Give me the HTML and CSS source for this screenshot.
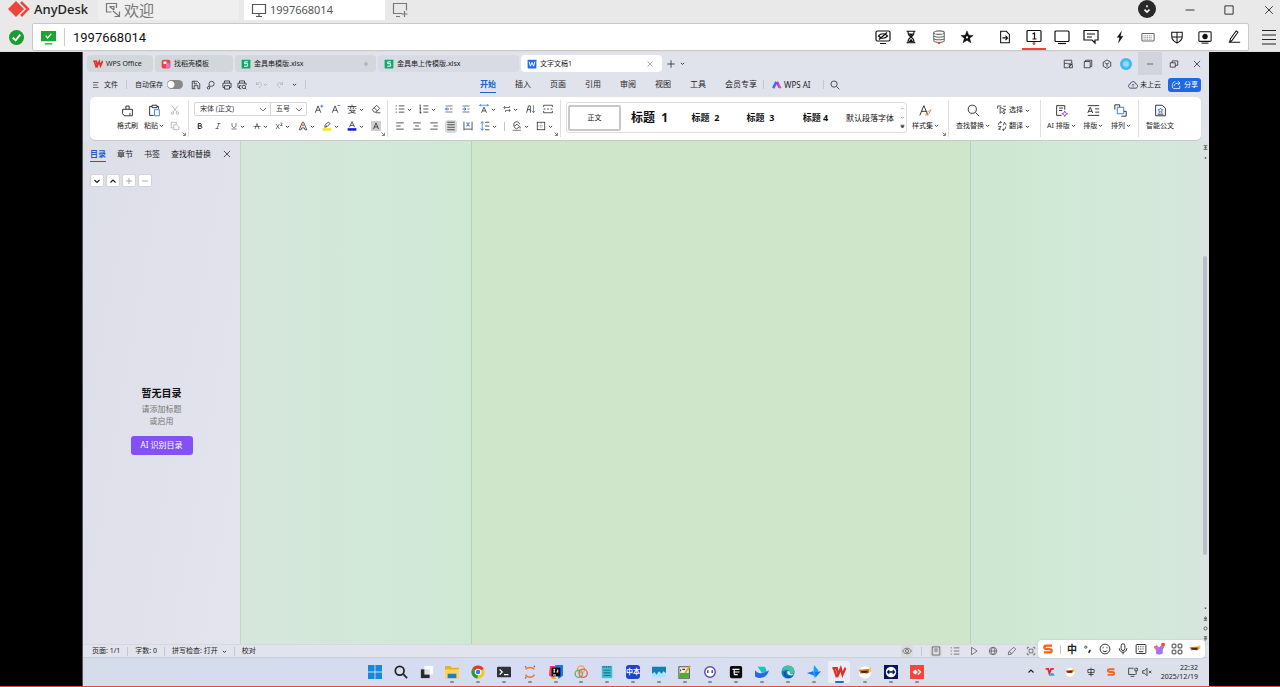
FILE: index.html
```html
<!DOCTYPE html>
<html lang="zh-CN">
<head>
<meta charset="utf-8">
<title>AnyDesk</title>
<link rel="stylesheet" href="styles.css">
</head>
<body>
<svg class="sprite" aria-hidden="true">
  <symbol id="chev" viewBox="0 0 8 8"><path d="M1.500 3 4 5.500 6.500 3"/></symbol>
  <symbol id="up" viewBox="0 0 8 8"><path d="M1.500 5.500 4 3l2.500 2.500"/></symbol>
  <symbol id="launch" viewBox="0 0 8 8"><path d="M2 2l4 4M6 2.500V6H2.500"/></symbol>
  <symbol id="x" viewBox="0 0 16 16"><path d="m3 3 10 10M13 3 3 13"/></symbol>
  <symbol id="minus" viewBox="0 0 16 16"><path d="M2 8h12"/></symbol>
  <symbol id="plus" viewBox="0 0 16 16"><path d="M2 8h12M8 2v12"/></symbol>
  <symbol id="square" viewBox="0 0 16 16"><path d="M2.500 2.500h11v11h-11z"/></symbol>
  <symbol id="menu" viewBox="0 0 16 16"><path d="M2 3h11M2 8h9M2 13h11"/></symbol>
  <symbol id="burger" viewBox="0 0 16 16"><path d="M1 1.500h14M1 6h14M1 10.500h14M1 15h14"/></symbol>
  <symbol id="welcome" viewBox="0 0 16 16"><path d="M6.500 10H1.500V1.500h10V6M4.500 4.500H9v3M8 9l6 5M14.500 9.500v5H9.500M4.500 4.500 9 8"/></symbol>
  <symbol id="screen" viewBox="0 0 16 16"><path d="M1.500 2.500h13v9h-13zM5 14.500h6M8 12v2"/></symbol>
  <symbol id="newscreen" viewBox="0 0 16 16"><path d="M10 11.500H1.500v-10h13v7M12.500 9v6M9.500 12h6M4 14.500h4"/></symbol>
  <symbol id="eyeoff" viewBox="0 0 16 16"><rect x="1" y="2" width="14" height="10" rx="1.500"/><path d="M3.500 7c2.500-3 6.500-3 9 0-2.500 3-6.500 3-9 0ZM4 10.500l8-7M5 14.500h6"/></symbol>
  <symbol id="glass" viewBox="0 0 16 16"><path d="M3 1.500h10M3 14.500h10M4.500 2c0 4 2 5 3.500 6 1.500-1 3.500-2 3.500-6M4.500 14c0-4 2-5 3.500-6 1.500 1 3.500 2 3.500 6"/><path d="M6 13.500 8 11l2 2.500zM6.500 4.500h3L8 6.500z" fill="currentColor"/></symbol>
  <symbol id="db" viewBox="0 0 16 16"><ellipse cx="8" cy="3" rx="6" ry="2"/><path d="M2 3v9c0 3 12 3 12 0V3M2 6c0 3 12 3 12 0M2 9c0 3 12 3 12 0"/><path d="m7 14 1 1.500L9 14" stroke="#ef443b" stroke-width="2"/></symbol>
  <symbol id="star" viewBox="0 0 16 16"><path d="m8 1 2 5 5 .3-4 3.200 1.500 5L8 11.700l-4.500 2.800 1.500-5-4-3.200L6 6z" fill="currentColor" stroke-width=".6"/><circle cx="8" cy="8.500" r="1.300" fill="#fff" stroke="none"/></symbol>
  <symbol id="filego" viewBox="0 0 16 16"><path d="M3 1.500h6.500L13 5v9.500H3zM5 9h6M8.500 6.500 11 9l-2.500 2.500"/></symbol>
  <symbol id="screen1" viewBox="0 0 16 16"><rect x="1" y="1.500" width="14" height="11" rx="1"/><path d="M6.500 5 8.500 4v6M6.500 10h4"/><circle cx="8" cy="14.500" r="1.400" fill="#ef443b" stroke="none"/></symbol>
  <symbol id="display" viewBox="0 0 16 16"><rect x="1" y="2" width="14" height="10.500" rx="1"/><path d="M4 14.500h8"/></symbol>
  <symbol id="chat" viewBox="0 0 16 16"><path d="M1 1.500h14v9.500h-3v3l-3-3H1zM4 5h8M4 8h5"/></symbol>
  <symbol id="bolt" viewBox="0 0 16 16"><path d="M10 1 4.500 8.500h3L6 15l5.500-8H8.500z" fill="currentColor" stroke-width=".2"/></symbol>
  <symbol id="keyboard" viewBox="0 0 16 16"><rect x="1" y="4" width="14" height="8.500" rx="1"/><path d="M3 6.500h10M3 8.500h10M3 10.500h10" stroke-dasharray="1 1" stroke-width="1"/></symbol>
  <symbol id="shield" viewBox="0 0 16 16"><path d="M2 2.500h12v5c0 4-3 6-6 7.500-3-1.500-6-3.500-6-7.500zM8 2.500V15M2 8h12"/></symbol>
  <symbol id="record" viewBox="0 0 16 16"><rect x="1" y="2" width="14" height="11" rx="1"/><circle cx="8" cy="7.500" r="2.500" fill="currentColor"/><path d="M4 15h8"/></symbol>
  <symbol id="penline" viewBox="0 0 16 16"><path d="M3 14 4 10l6.500-9 2 1.500L6 11.500 3 14h12"/></symbol>
  <symbol id="wps" viewBox="0 0 16 16"><path d="M.500 3.500h5L7 11l3-7 2 7 3.500-8" stroke="#e32d27" stroke-width="2.600"/><path d="M2 3.500 5 12.500l2-2" stroke="#e32d27" stroke-width="2.400"/></symbol>
  <symbol id="docer" viewBox="0 0 16 16"><rect x="1" y="1" width="14" height="14" rx="3" fill="#f0414b" stroke="none"/><path d="M4 4h5v4H4z" fill="#fff" stroke="none"/><path d="M8 7h6v7H8z" fill="#df72d0" stroke="none"/></symbol>
  <symbol id="sheet" viewBox="0 0 16 16"><rect x="1" y="1" width="14" height="14" rx="1" fill="#12a66a" stroke="none"/><path d="M11 4.500H6v3h4.500v4H5" stroke="#fff" stroke-width="1.600"/></symbol>
  <symbol id="word" viewBox="0 0 16 16"><rect x="1" y="1" width="14" height="14" rx="1" fill="#226bed" stroke="none"/><path d="m3.500 4.500 2 7 2.500-6 2.500 6 2-7" stroke="#fff" stroke-width="1.600"/></symbol>
  <symbol id="save" viewBox="0 0 16 16"><path d="M7 14H2V2h8l4 4v8h-3M5 2v4h5M5 14V9h6v5"/></symbol>
  <symbol id="pin" viewBox="0 0 16 16"><path d="M5 11V6a4 4 0 1 1 4 4H6"/><circle cx="4" cy="12.500" r="2"/></symbol>
  <symbol id="print" viewBox="0 0 16 16"><path d="M4 5V1.500h8V5M4 12H1.500V5h13v7H12M4 9h8v5.500H4z"/></symbol>
  <symbol id="preview" viewBox="0 0 16 16"><path d="M4 5V1.500h8V5M4 12H1.500V5h13v3M7 14H4V9h3"/><circle cx="11" cy="11" r="2.800"/><path d="m13 13 2 2"/></symbol>
  <symbol id="undo" viewBox="0 0 16 16"><path d="M3 2v5h5M3 7c4-6 10-4 10 0 0 3-3 4-5 7"/></symbol>
  <symbol id="redo" viewBox="0 0 16 16"><path d="M13 2v5H8M13 7C9 1 3 3 3 7c0 3 3 4 5 7"/></symbol>
  <symbol id="search" viewBox="0 0 16 16"><circle cx="6.500" cy="6.500" r="5"/><path d="m10.500 10.500 4.500 4.500"/></symbol>
  <symbol id="ai" viewBox="0 0 16 16"><path d="m2 13 5-10" stroke="#3f69ff" stroke-width="4"/><path d="m8 3 4 9" stroke="#a33dff" stroke-width="4"/><path d="m11 9 3 4" stroke="#ff479b" stroke-width="3"/></symbol>
  <symbol id="cloud" viewBox="0 0 16 16"><path d="M4 13C-1 12 1 6 4 6c1-5 8-4 8 0 5 1 4 7 0 7z"/><path d="M8 11V6.500M6 8.500l2-2 2 2" stroke="#2a66e0"/></symbol>
  <symbol id="share" viewBox="0 0 16 16"><path d="M7 2.500C1 3 1 13.500 4 13.500h10V9M5 10c0-4 3-5 9-5M11 2l3.500 3L11 8"/></symbol>
  <symbol id="image" viewBox="0 0 16 16"><path d="M8 14H2V2h12v5M2 8c4-3 6 2 12-2M10 9h5v5h-5zM9 14l6-7"/></symbol>
  <symbol id="layers" viewBox="0 0 16 16"><path d="M2 4h9.500v10H2zM4 4V2h10v10h-2"/></symbol>
  <symbol id="cube" viewBox="0 0 16 16"><path d="m8 1.500 6 3.500v6.500L8 15l-6-3.500V5zM4.500 6 8 8l3.500-2M8 8v4.500"/></symbol>
  <symbol id="restore" viewBox="0 0 16 16"><path d="M2 6h8v7H2zM5 6V3h9v7h-4"/></symbol>
  <symbol id="brush" viewBox="0 0 16 16"><path d="M2 6.500h12v8H4L2 12zM6 6.500V2.500h4v4M11 11v3"/></symbol>
  <symbol id="paste" viewBox="0 0 16 16"><path d="M7 14H2V3h3M11 3h2v3M5 1.500h6v3H5z"/><path d="M8 7h6v7.500H8z" stroke="#3578d9"/></symbol>
  <symbol id="cut" viewBox="0 0 16 16"><path d="m3 1 8 10M13 1 5 11"/><circle cx="4" cy="13" r="2"/><circle cx="12" cy="13" r="2"/></symbol>
  <symbol id="copy" viewBox="0 0 16 16"><path d="M5 11H2V2h8v3M6 6h5l3 3v5H6z"/></symbol>
  <symbol id="Aplus" viewBox="0 0 16 16"><path d="m2 14 4.500-11L11 14M3.500 10h6"/><path d="M12.500 1v5M10 3.500h5" stroke="#2d6be0"/></symbol>
  <symbol id="Aminus" viewBox="0 0 16 16"><path d="m2 14 4.500-11L11 14M3.500 10h6"/><path d="M10 2.500h5" stroke="#2d6be0"/></symbol>
  <symbol id="phon" viewBox="0 0 16 16"><path d="M1 4h14M8 1v3M6 4v4M10 4v4M3 6 1 8M13 6l2 2M3 10h10c-1 3-6 4-11 5M5 10c2 3 5 4 9 5"/></symbol>
  <symbol id="eraser" viewBox="0 0 16 16"><path d="m2 9 7-7 5 5-6 6H5zM5 6l5 5M8 14h7"/></symbol>
  <symbol id="B" viewBox="0 0 16 16"><path d="M4.500 3v10M4.500 3H8c4 0 4 4.700 0 4.700H4.500M8 7.700c5 0 5 5.300 0 5.300H4.500" stroke-width="2"/></symbol>
  <symbol id="I" viewBox="0 0 16 16"><path d="M7 3h6M3 13h6M10 3 6 13"/></symbol>
  <symbol id="U" viewBox="0 0 16 16"><path d="M4 2v5c0 5 8 5 8 0V2M3 14h10"/></symbol>
  <symbol id="strike" viewBox="0 0 16 16"><path d="m4 14 4-11 4 11M1 9h14"/></symbol>
  <symbol id="X2" viewBox="0 0 16 16"><path d="m2 4 7 10M9 4 2 14M11 2h3v2l-3 3h4"/></symbol>
  <symbol id="Aeffect" viewBox="0 0 16 16"><path d="m2 14 5-12h2l5 12h-3l-1-3H6l-1 3z"/><path d="M7 8h2L8 5z" stroke="#e8562c"/></symbol>
  <symbol id="marker" viewBox="0 0 16 16"><path d="M3 8h5M5 6l5-4 3 2-5 5-4 1"/><path d="M1 13.500h14" stroke="#f0ec00" stroke-width="4"/></symbol>
  <symbol id="Acolor" viewBox="0 0 16 16"><path d="m4 10 4-9 4 9M5.500 7h5"/><path d="M1 13.500h14" stroke="#1010ee" stroke-width="4"/></symbol>
  <symbol id="Ashade" viewBox="0 0 16 16"><path d="M0 0h16v16H0z" fill="#cfcfcf" stroke="none"/><path d="m4 13 4-10 4 10M5.500 9.500h5"/></symbol>
  <symbol id="bullets" viewBox="0 0 16 16"><path d="M6 3h9M6 8h9M6 13h9M1 3h2M1 8h2M1 13h2"/></symbol>
  <symbol id="numbers" viewBox="0 0 16 16"><path d="M7 3h8M7 8h8M7 13h8M2 1v14M1 2h1M1 7h2M1 14h3"/></symbol>
  <symbol id="outdent" viewBox="0 0 16 16"><path d="M1 2h14M10 8h5M1 14h14"/><path d="M8 8H1M4 5 1 8l3 3" stroke="#2d6be0" stroke-width="2"/></symbol>
  <symbol id="indent" viewBox="0 0 16 16"><path d="M1 2h14M11 8h4M1 14h14"/><path d="M1 8h7M5 5l3 3-3 3" stroke="#2d6be0" stroke-width="2"/></symbol>
  <symbol id="Awide" viewBox="0 0 16 16"><path d="m4 14 4-9 4 9M5.500 11h5"/><path d="M1 2h14M3 .5 1 2l2 2M13 .5 15 2l-2 2" stroke="#2d6be0"/></symbol>
  <symbol id="wrapmark" viewBox="0 0 16 16"><path d="M4 2 1.500 5 4 8M2 5h11V2M12 8l2.500 3-2.500 3M14 11H5v3"/></symbol>
  <symbol id="sort" viewBox="0 0 16 16"><path d="M1 14 4 3h3v11M2 9h5"/><path d="M12 2v12M9.500 11l2.500 3 2.500-3" stroke="#2d6be0"/></symbol>
  <symbol id="marks" viewBox="0 0 16 16"><path d="M1 5V2h14v3M1 11v3h14v-3M1 8h3M6.500 8h3M12 8h3"/></symbol>
  <symbol id="left" viewBox="0 0 16 16"><path d="M2 3h12M2 8h7M2 13h12"/></symbol>
  <symbol id="center" viewBox="0 0 16 16"><path d="M2 3h12M5 8h6M2 13h12"/></symbol>
  <symbol id="right" viewBox="0 0 16 16"><path d="M2 3h12M7 8h7M2 13h12"/></symbol>
  <symbol id="just" viewBox="0 0 16 16"><path d="M2 2h12M2 6h12M2 10h12M2 14h12"/></symbol>
  <symbol id="dist" viewBox="0 0 16 16"><path d="M1.500 1v14M14.500 1v14M2 13h12"/><path d="M5 3h2v5H5M11 3H9v5h2" stroke="#2d6be0"/></symbol>
  <symbol id="spacing" viewBox="0 0 16 16"><path d="M8 2h7M8 8h7M8 14h7"/><path d="M3.500 1v14M1 4l2.500-3L6 4M1 12l2.500 3L6 12" stroke="#2d6be0"/></symbol>
  <symbol id="bucket" viewBox="0 0 16 16"><path d="M3 8V5c0-5 9-5 9 0M3 9l5-4 4 4-5 4zM13 9v3"/><path d="M1 15h13" stroke="#999" stroke-width="2"/></symbol>
  <symbol id="border" viewBox="0 0 16 16"><rect x="2" y="2" width="12" height="12"/><path d="M8 4v8M4 8h8" stroke-dasharray="1 2"/></symbol>
  <symbol id="styles" viewBox="0 0 16 16"><path d="m1 14 5-12 5 12M3 9h6"/><path d="m8 14 2-4 5-3-3 5z" stroke="#d98958"/></symbol>
  <symbol id="cursor" viewBox="0 0 16 16"><path d="m5 4 9 3.500-4 1.500 3 4-2 1.500-3-4-3 3zM1 1.500h6M1 1.500V6M10 2h4"/></symbol>
  <symbol id="translate" viewBox="0 0 16 16"><path d="M2 6c0-3 2-4 5-4M5 0l2 2-2 2M14 9c0 4-2 5-5 5M11 12l-2 2 2 2M2 9h5M3 14l3-5M10 7l2-5 3 5M2 13h4"/></symbol>
  <symbol id="ailayout" viewBox="0 0 16 16"><path d="M8 14H2V2h10v5M5 5h5M5 8h4"/><path d="m12 8.500 1 2.500 2.500 1-2.500 1-1 2.500-1-2.500-2.500-1 2.500-1z" stroke="#8a43e0"/></symbol>
  <symbol id="layout" viewBox="0 0 16 16"><path d="M1 2h14M1 14h14M10 6h5M10 10h5M1 11l3-7 3 7M2 9h4"/></symbol>
  <symbol id="arrange" viewBox="0 0 16 16"><path d="M1 7V1h6v3M9 15h6V9h-3"/><path d="M4 4h8v8H4z" stroke="#2d6be0"/></symbol>
  <symbol id="smart" viewBox="0 0 16 16"><path d="M2 1.500h8L14 5v9.500H2zM4.500 12.500h7"/><path d="m8 5 1 1.700 2 .3-1.500 1.500.5 2-2-1-2 1 .5-2L5 7l2-.3z" stroke="#2d6be0"/></symbol>
  <symbol id="eye" viewBox="0 0 16 16"><path d="M1 8c3.500-6 10.500-6 14 0-3.500 6-10.500 6-14 0Z"/><circle cx="8" cy="8" r="2.500"/></symbol>
  <symbol id="page" viewBox="0 0 16 16"><path d="M2 1.500h12v13H2zM5 5h6M5 8h6"/></symbol>
  <symbol id="play" viewBox="0 0 16 16"><path d="m4 2 9 6-9 6z"/></symbol>
  <symbol id="globe" viewBox="0 0 16 16"><circle cx="8" cy="8" r="6"/><path d="M2 8h12M8 2c-4 3-4 9 0 12M8 2c4 3 4 9 0 12"/></symbol>
  <symbol id="pencil" viewBox="0 0 16 16"><path d="m2 14 1-5 8-7 3 3-7 8zM3 9c2 0 3 1 4 4"/></symbol>
  <symbol id="focus" viewBox="0 0 16 16"><path d="M2 5V2h3M11 2h3v3M2 11v3h3M14 11v3h-3M5 5h6v6H5z"/></symbol>
  <symbol id="sogou" viewBox="0 0 16 16"><path d="M13.500 3.500H6c-4 0-4 4.500 0 4.500h4c4 0 4 4.500 0 4.500H2.500" stroke="#f3661c" stroke-width="3"/></symbol>
  <symbol id="punct" viewBox="0 0 16 16"><circle cx="4.500" cy="5" r="1.800"/><path d="M11 9v2l-2 3" stroke-width="2.600"/></symbol>
  <symbol id="smile" viewBox="0 0 16 16"><circle cx="8" cy="8" r="6.500"/><path d="M5.500 5.500V7M10.500 5.500V7M5 10c1.500 2 4.500 2 6 0"/></symbol>
  <symbol id="mic" viewBox="0 0 16 16"><rect x="5.500" y="1" width="5" height="9" rx="2.500"/><path d="M3 7c0 7 10 7 10 0M8 12v3"/></symbol>
  <symbol id="softkeys" viewBox="0 0 16 16"><rect x="1.500" y="2" width="13" height="12" rx="1"/><path d="M4 5h8M4 8h8" stroke-dasharray="1.500 1.500"/><path d="M5 11.500h6"/></symbol>
  <symbol id="shirt" viewBox="0 0 16 16"><path d="m1 5 4-2 3 3 3-3 4 2-2 4v5c-3 2-7 2-9 0V9z" fill="#9b78ee" stroke="none"/><path d="M1 5 5 3l3 3v4H4z" fill="#ea6ba4" stroke="none"/><circle cx="13.500" cy="2" r="2.500" fill="#f34b38" stroke="none"/></symbol>
  <symbol id="grid" viewBox="0 0 16 16"><rect x="1.500" y="1.500" width="5" height="5" rx="1"/><rect x="9.500" y="1.500" width="5" height="5" rx="1"/><rect x="1.500" y="9.500" width="5" height="5" rx="1"/><rect x="9.500" y="9.500" width="5" height="5" rx="1"/></symbol>
  <symbol id="dog" viewBox="0 0 16 16"><circle cx="8" cy="8.500" r="7" fill="#fff" stroke="none"/><path d="M1 5.500 13 4.500v4l-3 1.500-3-1-4 1z" fill="#d76b22" stroke="none"/><path d="m3 7 8-.5v2L7 9l-3-.5z" fill="#35211c" stroke="none"/><path d="M14 3v5" stroke="#f7c92c" stroke-width="2"/></symbol>
  <symbol id="win" viewBox="0 0 16 16"><path d="M0 0h7.500v7.500H0zM8.500 0H16v7.500H8.500zM0 8.500h7.500V16H0zM8.500 8.500H16V16H8.500z" fill="#1689d9" stroke="none"/></symbol>
  <symbol id="tasks" viewBox="0 0 16 16"><path d="M1 5h10v10H1z" fill="#292929" stroke="none"/><path d="M5 1h10v10H5z" fill="#fff" fill-opacity=".85" stroke="none"/></symbol>
  <symbol id="folder" viewBox="0 0 16 16"><path d="M0 1h6l2 2h8v12H0z" fill="#f0ae22" stroke="none"/><path d="M0 5h16v10H0z" fill="#ffd353" stroke="none"/><path d="M3 10h10v5H3z" fill="#167fd0" stroke="none"/></symbol>
  <symbol id="chrome" viewBox="0 0 16 16"><circle cx="8" cy="8" r="7.500" fill="#f7c51d" stroke="none"/><path d="M8 8 1.500 4.200a7.500 7.500 0 0 1 13 0z" fill="#e23b2e" stroke="none"/><path d="M8 8 1.500 4.200a7.500 7.500 0 0 0 6 11.300z" fill="#299b4c" stroke="none"/><circle cx="8" cy="8" r="3.200" fill="#317be9" stroke="#fff"/></symbol>
  <symbol id="term" viewBox="0 0 16 16"><rect y="2" width="16" height="12" rx="1" fill="#303236" stroke="none"/><path d="m3 5 3 3-3 3M8 11h5" stroke="#fff" stroke-width="1.500"/></symbol>
  <symbol id="jupyter" viewBox="0 0 16 16"><path d="M3 5c2-3 8-3 10 0M3 11c2 4 8 4 10 0" stroke="#ef7828" stroke-width="1.700"/><circle cx="3" cy="2" r="1" fill="#777" stroke="none"/><circle cx="13" cy="1.500" r="1" fill="#777" stroke="none"/><circle cx="3" cy="14.500" r="1" fill="#777" stroke="none"/></symbol>
  <symbol id="idea" viewBox="0 0 16 16"><path d="M1 1h8L5 15 0 12z" fill="#fb385d" stroke="none"/><path d="M7 0h9v12l-5 4z" fill="#1679ee" stroke="none"/><path d="m3 12 6 4H3z" fill="#ff9a24" stroke="none"/><path d="M3 3h10v10H3z" fill="#050505" stroke="none"/><path d="M5 5h2M6 5v3M5 8h2M10 5v3H8.500M4.500 11.500H8" stroke="#fff"/></symbol>
  <symbol id="navicat" viewBox="0 0 16 16"><circle cx="8" cy="5" r="4" stroke="#f3a43b" stroke-width="1.500"/><circle cx="5.500" cy="10" r="4.200" stroke="#63af78" stroke-width="1.500"/><circle cx="10.500" cy="9.500" r="4.700" stroke="#e75f48" stroke-width="1.500"/></symbol>
  <symbol id="notes" viewBox="0 0 16 16"><path d="M2 1h12v14H2z" fill="#45bed0" stroke="none"/><path d="M4 6h8M4 9h8M4 12h8" stroke="#17738c"/><path d="M3 2h10" stroke="#265f70" stroke-width="2" stroke-dasharray="1 1"/></symbol>
  <symbol id="monitor" viewBox="0 0 16 16"><path d="M0 2h16v12H0z" fill="#a8e4fa" stroke="none"/><path d="M0 2h16v7l-3-2-2 3-3-3-3 4-2-3-3 2z" fill="#147eb8" stroke="none"/></symbol>
  <symbol id="npp" viewBox="0 0 16 16"><path d="M1 2h12v13H1z" fill="#eef3dd" stroke="#555"/><path d="M1.500 9h11v5.500h-11z" fill="#4cae38" stroke="none"/><path d="m8 9 6-8" stroke="#d8a520" stroke-width="2"/><path d="M3 5v2M5 5h3" stroke="#333"/></symbol>
  <symbol id="face" viewBox="0 0 16 16"><circle cx="8" cy="8" r="6" fill="#fff" stroke="#5b46bd" stroke-width="1.600"/><path d="M5.500 6v3M10.500 6v3" stroke="#333" stroke-width="1.500"/></symbol>
  <symbol id="cursorapp" viewBox="0 0 16 16"><rect x="1" y="1" width="14" height="14" rx="2" fill="#090909" stroke="none"/><path d="M4 5h8M5 8h7M6 11h4M6 5v6" stroke="#fff"/></symbol>
  <symbol id="lark" viewBox="0 0 16 16"><path d="M3 2h8c2 2 2 4 2 6L8 9z" fill="#13c9b1" stroke="none"/><path d="M0 6c4 5 9 4 16 0-2 8-9 11-16 7z" fill="#2767ed" stroke="none"/></symbol>
  <symbol id="edge" viewBox="0 0 16 16"><circle cx="8" cy="8" r="7.500" fill="#1683c9" stroke="none"/><path d="M1 7C3-2 16-1 15.500 8c-3 4-7 2-5-1-4-3-7-1-9.500 0" fill="#42c6a2" stroke="none"/><path d="M6 7c-2 6 4 7 8 5-5 6-12 2-11-4z" fill="#1056a8" stroke="none"/><path d="M7 8c1-2 4-1 3 1 1 2 3 2 5 1-2 3-8 2-8-2" fill="#e7f2f5" stroke="none"/></symbol>
  <symbol id="bird" viewBox="0 0 16 16"><path d="m8 0 5 6-4 9-2-5z" fill="#16a6ff" stroke="none"/><path d="m0 9 7-2 1 5zM9 8l7-1-6 7z" fill="#1674f0" stroke="none"/></symbol>
  <symbol id="team" viewBox="0 0 16 16"><path d="M0 0h16v16H0z" fill="#08145d" stroke="none"/><circle cx="8" cy="8" r="6" fill="#fff" stroke="none"/><path d="M4 8h8M6 6 4 8l2 2M10 6l2 2-2 2" stroke="#08145d" stroke-width="1.500"/></symbol>
  <symbol id="anyapp" viewBox="0 0 16 16"><path d="M0 0h16v16H0z" fill="#fb423b" stroke="none"/><path d="m6 5 3 3-3 3-3-3z" fill="#fff" stroke="none"/><path d="m9 5 3 3-3 3" stroke="#fff" stroke-width="1.500"/></symbol>
  <symbol id="updater" viewBox="0 0 16 16"><path d="M1 3h4l2 7 3-7h4" stroke="#df3028" stroke-width="3"/><path d="M7 14c1-7 9-5 8 0z" fill="#27a6e8" stroke="none"/></symbol>
  <symbol id="usb" viewBox="0 0 16 16"><path d="M8 1v14M3 4h10v5H3zM4 12h8"/></symbol>
  <symbol id="net" viewBox="0 0 16 16"><path d="M9 2H1v10h11M4 15h6M12 2h3v4h-4V2M13 6v6"/></symbol>
  <symbol id="mute" viewBox="0 0 16 16"><path d="M1 6h3l4-4v12l-4-4H1zM11 6l4 4M15 6l-4 4"/></symbol>
  <symbol id="endpage" viewBox="0 0 8 8"><path d="M1 1h6M1 7h6M2 4h4M4 2v4"/></symbol>
</svg>

<header class="titlebar">
  <svg class="logo" viewBox="0 0 22 16"><path d="m8 0 8 8-8 8-8-8z" fill="#ef443b"/><path d="m13 1 7 7-7 7" fill="none" stroke="#ef443b" stroke-width="2.500"/></svg>
  <h1 class="brand">AnyDesk</h1>
  <button class="session welcome"><svg class="i lg"><use href="#welcome"/></svg>欢迎</button>
  <button class="session current"><svg class="i lg"><use href="#screen"/></svg>1997668014</button>
  <button class="session-new" aria-label="新会话"><svg class="i lg"><use href="#newscreen"/></svg></button>
  <div class="frame-controls">
    <button class="user" aria-label="账户"><svg class="i sm" viewBox="0 0 16 16"><path d="m4 9 4 4 4-4M8 2v3" stroke-width="2.500"/></svg></button>
    <button aria-label="最小化"><svg class="i md"><use href="#minus"/></svg></button>
    <button aria-label="最大化"><svg class="i md"><use href="#square"/></svg></button>
    <button aria-label="关闭"><svg class="i md"><use href="#x"/></svg></button>
  </div>
</header>
<nav class="addressbar">
  <svg class="ok" viewBox="0 0 16 16"><circle cx="8" cy="8" r="8" fill="#1a9d30"/><path d="m4 8 3 3 5-6" fill="none" stroke="#fff" stroke-width="2"/></svg>
  <div class="address">
    <svg class="ok" viewBox="0 0 16 16"><path d="M0 1h16v11H0zM4 14h8v1.500H4z" fill="#1ba635"/><path d="m5 6 2 2.500L11 4" fill="none" stroke="#fff" stroke-width="1.300"/></svg>
    <input class="address-input" aria-label="远程地址" value="1997668014">
    <div class="remote-tools first">
      <button aria-label="隐私"><svg class="i lg"><use href="#eyeoff"/></svg></button>
      <button aria-label="等待"><svg class="i tool"><use href="#glass"/></svg></button>
      <button class="faded" aria-label="数据"><svg class="i tool"><use href="#db"/></svg></button>
      <button aria-label="收藏"><svg class="i tool"><use href="#star"/></svg></button>
    </div>
    <div class="remote-tools second">
      <button aria-label="文件传输"><svg class="i tool"><use href="#filego"/></svg></button>
      <button class="selected" aria-label="显示器 1"><svg class="i lg"><use href="#screen1"/></svg></button>
      <button aria-label="显示"><svg class="i lg"><use href="#display"/></svg></button>
      <button aria-label="聊天"><svg class="i lg"><use href="#chat"/></svg></button>
      <button aria-label="操作"><svg class="i tool"><use href="#bolt"/></svg></button>
      <button class="faded" aria-label="键盘"><svg class="i tool"><use href="#keyboard"/></svg></button>
      <button aria-label="权限"><svg class="i tool"><use href="#shield"/></svg></button>
      <button aria-label="录制"><svg class="i tool"><use href="#record"/></svg></button>
      <button aria-label="白板"><svg class="i tool"><use href="#penline"/></svg></button>
    </div>
  </div>
  <button class="main-menu" aria-label="菜单"><svg class="i lg"><use href="#burger"/></svg></button>
</nav>

<main class="remote">
<div class="desktop">
  <div class="doc-tabs">
    <button class="doc-tab home"><svg class="i sm"><use href="#wps"/></svg>WPS Office</button>
    <button class="doc-tab docer"><svg class="i sm"><use href="#docer"/></svg>找稻壳模板</button>
    <button class="doc-tab"><svg class="i sm"><use href="#sheet"/></svg>金具串模版.xlsx<span class="unsaved"></span></button>
    <button class="doc-tab pale"><svg class="i sm"><use href="#sheet"/></svg>金具串上传模版.xlsx</button>
    <button class="doc-tab active"><svg class="i sm"><use href="#word"/></svg>文字文稿1<svg class="i xs close"><use href="#x"/></svg></button>
    <button class="add" aria-label="新建"><svg class="i sm"><use href="#plus"/></svg><svg class="i chev"><use href="#chev"/></svg></button>
    <div class="wps-tools">
      <button aria-label="图片"><svg class="i sm"><use href="#image"/></svg></button>
      <button aria-label="窗口"><svg class="i sm"><use href="#layers"/></svg></button>
      <button aria-label="应用"><svg class="i sm"><use href="#cube"/></svg></button>
    </div>
    <span class="avatar"></span>
    <div class="wps-frame">
      <button class="hover" aria-label="最小化"><svg class="i xs"><use href="#minus"/></svg></button>
      <button aria-label="还原"><svg class="i sm"><use href="#restore"/></svg></button>
      <button aria-label="关闭"><svg class="i sm"><use href="#x"/></svg></button>
    </div>
  </div>

  <div class="menubar">
    <div class="quick">
      <button class="file"><svg class="i xs"><use href="#menu"/></svg>文件</button>
      <span class="rule"></span>
      <label class="autosave">自动保存<input type="checkbox"></label>
      <div class="quick-icons">
        <button aria-label="保存"><svg class="i sm"><use href="#save"/></svg></button>
        <button aria-label="输出"><svg class="i sm"><use href="#pin"/></svg></button>
        <button aria-label="打印"><svg class="i sm"><use href="#print"/></svg></button>
        <button aria-label="预览"><svg class="i sm"><use href="#preview"/></svg></button>
      </div>
      <button class="dim" aria-label="撤销"><svg class="i xs"><use href="#undo"/></svg><svg class="i chev"><use href="#chev"/></svg></button>
      <button class="dim" aria-label="恢复"><svg class="i xs"><use href="#redo"/></svg></button>
      <button aria-label="更多"><svg class="i chev"><use href="#chev"/></svg></button>
      <span class="rule"></span>
    </div>
    <nav class="menus">
      <button class="on">开始</button><button>插入</button><button>页面</button><button>引用</button><button>审阅</button><button>视图</button><button>工具</button><button>会员专享</button>
    </nav>
    <span class="rule"></span>
    <button class="wpsai"><svg class="i sm"><use href="#ai"/></svg>WPS AI</button>
    <span class="rule"></span>
    <button class="find" aria-label="搜索"><svg class="i sm"><use href="#search"/></svg></button>
    <button class="cloud"><svg class="i sm"><use href="#cloud"/></svg>未上云</button>
    <button class="share"><svg class="i sm"><use href="#share"/></svg>分享</button>
  </div>

  <section class="ribbon">
    <div class="group clipboard">
      <button class="big"><svg class="i rb"><use href="#brush"/></svg><span>格式刷</span></button>
      <button class="big"><svg class="i rb"><use href="#paste"/></svg><span>粘贴<svg class="i chev"><use href="#chev"/></svg></span></button>
      <div class="stack dim">
        <button aria-label="剪切"><svg class="i sm"><use href="#cut"/></svg></button>
        <button aria-label="复制"><svg class="i sm"><use href="#copy"/></svg></button>
      </div>
      <svg class="i launch"><use href="#launch"/></svg>
    </div>
    <div class="group font">
      <div class="row">
        <div class="combos">
          <select aria-label="字体"><option>宋体 (正文)</option></select>
          <select class="size" aria-label="字号"><option>五号</option></select>
        </div>
        <button aria-label="增大字号"><svg class="i sm"><use href="#Aplus"/></svg></button>
        <button aria-label="减小字号"><svg class="i sm"><use href="#Aminus"/></svg></button>
        <button aria-label="拼音"><svg class="i sm"><use href="#phon"/></svg><svg class="i chev"><use href="#chev"/></svg></button>
        <button aria-label="清除格式"><svg class="i sm"><use href="#eraser"/></svg></button>
      </div>
      <div class="row">
        <button aria-label="加粗"><svg class="i xs"><use href="#B"/></svg></button>
        <button aria-label="倾斜"><svg class="i xs"><use href="#I"/></svg></button>
        <button aria-label="下划线"><svg class="i xs"><use href="#U"/></svg><svg class="i chev"><use href="#chev"/></svg></button>
        <button aria-label="删除线"><svg class="i xs"><use href="#strike"/></svg><svg class="i chev"><use href="#chev"/></svg></button>
        <button aria-label="上标"><svg class="i xs"><use href="#X2"/></svg><svg class="i chev"><use href="#chev"/></svg></button>
        <button aria-label="文字效果"><svg class="i sm"><use href="#Aeffect"/></svg><svg class="i chev"><use href="#chev"/></svg></button>
        <button aria-label="突出显示"><svg class="i sm"><use href="#marker"/></svg><svg class="i chev"><use href="#chev"/></svg></button>
        <button aria-label="字体颜色"><svg class="i sm"><use href="#Acolor"/></svg><svg class="i chev"><use href="#chev"/></svg></button>
        <button aria-label="字符底纹"><svg class="i sm"><use href="#Ashade"/></svg></button>
      </div>
      <svg class="i launch"><use href="#launch"/></svg>
    </div>
    <div class="group para">
      <div class="row">
        <button aria-label="项目符号"><svg class="i sm"><use href="#bullets"/></svg><svg class="i chev"><use href="#chev"/></svg></button>
        <button aria-label="编号"><svg class="i sm"><use href="#numbers"/></svg><svg class="i chev"><use href="#chev"/></svg></button>
        <button aria-label="减少缩进"><svg class="i xs"><use href="#outdent"/></svg></button>
        <button aria-label="增加缩进"><svg class="i xs"><use href="#indent"/></svg></button>
        <button aria-label="中文版式"><svg class="i sm"><use href="#Awide"/></svg><svg class="i chev"><use href="#chev"/></svg></button>
        <button aria-label="换行"><svg class="i xs"><use href="#wrapmark"/></svg><svg class="i chev"><use href="#chev"/></svg></button>
        <button aria-label="排序"><svg class="i sm"><use href="#sort"/></svg></button>
        <button aria-label="制表位"><svg class="i sm"><use href="#marks"/></svg></button>
      </div>
      <div class="row">
        <button aria-label="左对齐"><svg class="i sm"><use href="#left"/></svg></button>
        <button aria-label="居中"><svg class="i sm"><use href="#center"/></svg></button>
        <button aria-label="右对齐"><svg class="i sm"><use href="#right"/></svg></button>
        <button class="pressed" aria-label="两端对齐"><svg class="i sm"><use href="#just"/></svg></button>
        <button aria-label="分散对齐"><svg class="i sm"><use href="#dist"/></svg></button>
        <button aria-label="行距"><svg class="i sm"><use href="#spacing"/></svg><svg class="i chev"><use href="#chev"/></svg></button>
        <span class="rule"></span>
        <button aria-label="底纹"><svg class="i sm"><use href="#bucket"/></svg><svg class="i chev"><use href="#chev"/></svg></button>
        <button aria-label="边框"><svg class="i sm"><use href="#border"/></svg><svg class="i chev"><use href="#chev"/></svg></button>
      </div>
      <svg class="i launch"><use href="#launch"/></svg>
    </div>
    <div class="group style-group">
      <div class="gallery">
        <button class="chosen">正文</button>
        <button class="h1">标题&nbsp; 1</button>
        <button class="h2">标题&nbsp; 2</button>
        <button class="h2">标题&nbsp; 3</button>
        <button class="h4">标题 4</button>
        <button class="default">默认段落字体</button>
        <div class="gallery-nav"><svg class="i chev dim"><use href="#up"/></svg><svg class="i chev dim"><use href="#chev"/></svg><svg class="i chev" viewBox="0 0 8 8"><path d="M1 2h6M2 4h4L4 6.500z"/></svg></div>
      </div>
      <button class="big"><svg class="i rb"><use href="#styles"/></svg><span>样式集<svg class="i chev"><use href="#chev"/></svg></span></button>
      <svg class="i launch"><use href="#launch"/></svg>
    </div>
    <div class="group search-group">
      <button class="big"><svg class="i rb"><use href="#search"/></svg><span>查找替换<svg class="i chev"><use href="#chev"/></svg></span></button>
      <div class="stack">
        <button><svg class="i sm"><use href="#cursor"/></svg>选择<svg class="i chev"><use href="#chev"/></svg></button>
        <button><svg class="i sm"><use href="#translate"/></svg>翻译<svg class="i chev"><use href="#chev"/></svg></button>
      </div>
    </div>
    <div class="group arrange-group">
      <button class="big"><svg class="i rb"><use href="#ailayout"/></svg><span>AI 排版<svg class="i chev"><use href="#chev"/></svg></span></button>
      <button class="big"><svg class="i rb"><use href="#layout"/></svg><span>排版<svg class="i chev"><use href="#chev"/></svg></span></button>
      <button class="big"><svg class="i rb"><use href="#arrange"/></svg><span>排列<svg class="i chev"><use href="#chev"/></svg></span></button>
    </div>
    <div class="group last">
      <button class="big"><svg class="i rb"><use href="#smart"/></svg><span>智能公文</span></button>
    </div>
  </section>

  <div class="workspace">
    <aside class="outline">
      <div class="outline-tabs">
        <button class="on">目录</button><button>章节</button><button>书签</button><button>查找和替换</button>
        <button aria-label="关闭"><svg class="i sm"><use href="#x"/></svg></button>
      </div>
      <div class="outline-tools">
        <button aria-label="展开"><svg class="i xs"><use href="#chev"/></svg></button>
        <button aria-label="折叠"><svg class="i xs"><use href="#up"/></svg></button>
        <button class="soft" aria-label="增加"><svg class="i xs"><use href="#plus"/></svg></button>
        <button class="soft" aria-label="减少"><svg class="i xs"><use href="#minus"/></svg></button>
      </div>
      <div class="empty">
        <h2>暂无目录</h2>
        <p>请添加标题<br>或启用</p>
        <button>AI 识别目录</button>
      </div>
    </aside>
    <div class="canvas"><article class="sheet"></article></div>
    <div class="scroll">
      <svg class="i chev"><use href="#endpage"/></svg>
      <svg class="i chev tri" viewBox="0 0 8 8"><path d="m3 5 1-1.500L5 5z"/></svg>
      <div class="track"><div class="thumb"></div></div>
      <div class="jumps">
        <svg class="i chev tri" viewBox="0 0 8 8"><path d="m3 3 1 1.500L5 3z"/></svg>
        <svg class="i chev" viewBox="0 0 8 8"><path d="M2 4l2-3 2 3zM2 7l2-2 2 2z"/></svg>
        <svg class="i chev" viewBox="0 0 8 8"><circle cx="4" cy="4" r="2.500"/></svg>
        <svg class="i chev" viewBox="0 0 8 8"><path d="M2 4l2 3 2-3zM2 1l2 2 2-2z"/></svg>
      </div>
    </div>
  </div>

  <footer class="status">
    <span>页面: 1/1</span><span class="rule"></span><span>字数: 0</span><span class="rule"></span>
    <button>拼写检查: 打开<svg class="i chev"><use href="#chev"/></svg></button><span class="rule"></span><span>校对</span>
    <div class="views">
      <button class="pressed" aria-label="护眼模式"><svg class="i sm"><use href="#eye"/></svg></button>
      <span class="rule"></span>
      <button class="pressed" aria-label="页面视图"><svg class="i sm"><use href="#page"/></svg></button>
      <button aria-label="大纲"><svg class="i sm"><use href="#bullets"/></svg></button>
      <button aria-label="放映"><svg class="i sm"><use href="#play"/></svg></button>
      <button aria-label="网页"><svg class="i sm"><use href="#globe"/></svg></button>
      <button aria-label="写作"><svg class="i sm"><use href="#pencil"/></svg></button>
      <button aria-label="全屏"><svg class="i sm"><use href="#focus"/></svg></button>
    </div>
  </footer>

  <div class="taskbar">
    <div class="apps">
      <button class="plain" aria-label="开始"><svg class="i app"><use href="#win"/></svg></button>
      <button class="plain" aria-label="搜索"><svg class="i app bold"><use href="#search"/></svg></button>
      <button class="plain" aria-label="任务视图"><svg class="i app"><use href="#tasks"/></svg></button>
      <button aria-label="资源管理器"><svg class="i app"><use href="#folder"/></svg></button>
      <button aria-label="Chrome"><svg class="i app"><use href="#chrome"/></svg></button>
      <button aria-label="终端"><svg class="i app"><use href="#term"/></svg></button>
      <button aria-label="Jupyter"><svg class="i app"><use href="#jupyter"/></svg></button>
      <button aria-label="IDEA"><svg class="i app"><use href="#idea"/></svg></button>
      <button aria-label="Navicat"><svg class="i app"><use href="#navicat"/></svg></button>
      <button aria-label="记事本"><svg class="i app"><use href="#notes"/></svg></button>
      <button><span class="tile">中本</span></button>
      <button aria-label="监视器"><svg class="i app"><use href="#monitor"/></svg></button>
      <button aria-label="Notepad++"><svg class="i app"><use href="#npp"/></svg></button>
      <button aria-label="助手"><svg class="i app"><use href="#face"/></svg></button>
      <button aria-label="Cursor"><svg class="i app"><use href="#cursorapp"/></svg></button>
      <button aria-label="飞书"><svg class="i app"><use href="#lark"/></svg></button>
      <button aria-label="Edge"><svg class="i app"><use href="#edge"/></svg></button>
      <button aria-label="迅雷"><svg class="i app"><use href="#bird"/></svg></button>
      <button class="focused" aria-label="WPS"><svg class="i app"><use href="#wps"/></svg></button>
      <button aria-label="搜狗"><svg class="i app"><use href="#dog"/></svg></button>
      <button aria-label="TeamViewer"><svg class="i app"><use href="#team"/></svg></button>
      <button aria-label="AnyDesk"><svg class="i app"><use href="#anyapp"/></svg></button>
    </div>
    <div class="tray">
      <svg class="i xs"><use href="#up"/></svg>
      <svg class="i sm"><use href="#updater"/></svg>
      <svg class="i sm"><use href="#dog"/></svg>
      <svg class="i sm"><use href="#usb"/></svg>
      <svg class="i sm"><use href="#sogou"/></svg>
    </div>
    <svg class="i sm"><use href="#net"/></svg>
    <svg class="i sm"><use href="#mute"/></svg>
    <time class="clock">22:32<br>2025/12/19</time>
  </div>

  <div class="ime">
    <svg class="i md"><use href="#sogou"/></svg>
    <span class="rule"></span>
    <span class="lang">中</span>
    <svg class="i sm"><use href="#punct"/></svg>
    <svg class="i md"><use href="#smile"/></svg>
    <svg class="i md"><use href="#mic"/></svg>
    <svg class="i md"><use href="#softkeys"/></svg>
    <svg class="i md"><use href="#shirt"/></svg>
    <svg class="i md"><use href="#grid"/></svg>
    <svg class="i md"><use href="#dog"/></svg>
  </div>
</div>
</main>
</body>
</html>
```

FILE: styles.css
```css
* { box-sizing: border-box; }
body {
  margin: 0;
  min-height: 100vh;
  display: flex;
  flex-direction: column;
  background: #e9e9e9;
  color: #222;
  font: 7px/10px "Noto Sans", "Noto Sans CJK SC", sans-serif;
  border-bottom: 1px solid #ef443b;
}
button, input, select { font: inherit; color: inherit; margin: 0; padding: 0; border: 0; background: none; }
button { display: flex; align-items: center; justify-content: center; white-space: nowrap; flex: none; }
h1, h2, p { margin: 0; }
.sprite { display: none; }

/* icons */
.i { flex: none; width: 10px; height: 10px; fill: none; stroke: currentColor; stroke-width: 1.2; overflow: visible; }
.xs { width: 8px; height: 8px; }
.md { width: 12px; height: 12px; }
.rb { width: 13px; height: 13px; stroke-width: 1.1; }
.app { width: 14px; height: 14px; }
.tool { width: 14px; height: 14px; }
.lg { width: 16px; height: 16px; stroke-width: 1.2; }
.chev { width: 5px; height: 5px; stroke-width: 1.4; }
.bold { stroke-width: 2; }
.dim { color: #a5a7ac; }
.rule { flex: none; width: 1px; height: 9px; background: #c5c7d0; }

/* AnyDesk frame */
.titlebar { display: flex; align-items: flex-start; height: 23px; padding-left: 8px; }
.logo { width: 22px; height: 16px; margin-top: 1px; }
.brand { width: 64px; margin-left: 4px; font-size: 13px; line-height: 19px; font-weight: 500; }
.session { height: 20px; width: 141px; justify-content: flex-start; gap: 3px; padding-left: 7px; color: #555; font-size: 11px; }
.welcome { background: #efefef; font-size: 15px; color: #777; }
.current { background: #fff; margin-left: 5px; }
.session-new { margin-left: 7px; height: 19px; color: #777; }
.frame-controls { margin-left: auto; width: 142px; padding-right: 5px; display: flex; justify-content: space-between; }
.frame-controls button { height: 19px; width: 12px; }
.frame-controls .user { width: 18px; height: 18px; border-radius: 50%; background: #282828; color: #fff; }
.addressbar { display: flex; align-items: center; height: 29px; padding: 0 3px 0 9px; border-bottom: 1px solid #ddd; }
.ok { flex: none; width: 15px; height: 15px; }
.address { flex: 1; display: flex; align-items: center; height: 28px; margin: 0 12px 0 8px; padding: 0 6px 0 8px; background: #fff; border: 1px solid #c9c9c9; border-radius: 2px; }
.address-input { flex: 1; min-width: 0; height: 18px; margin-left: 8px; padding-left: 8px; border-left: 1px solid #ccc; font-family: Roboto, sans-serif; font-size: 13px; color: #111; }
.remote-tools { display: flex; justify-content: space-between; color: #111; }
.remote-tools button { width: 16px; height: 26px; }
.first { width: 100px; margin-right: 22px; }
.second { width: 245px; }
.remote-tools .faded { color: #666; }
.remote-tools .selected { width: 24px; margin: 0 -4px; border-bottom: 2px solid #ef443b; padding-top: 2px; }
.main-menu { width: 16px; }

/* remote desktop */
.remote { flex: 1; display: flex; padding: 0 71px 0 82px; background: #000; }
.desktop { position: relative; flex: 1; min-width: 0; display: flex; flex-direction: column; background: #e0e2ec; border-left: 1px solid #555; }
.doc-tabs { display: flex; align-items: center; gap: 2px; height: 23px; padding-left: 4px; }
.doc-tab { width: 141px; height: 17px; justify-content: flex-start; gap: 3px; padding: 0 8px 0 6px; background: #d4d7de; border-radius: 4px; }
.home { width: 66px; background: #d2d8da; }
.docer { width: 78px; background: #d2d8da; }
.pale { background: #d8dae4; }
.doc-tab.active { background: #fff; }
.unsaved { width: 4px; height: 4px; margin-left: auto; border-radius: 50%; background: #b6b8bf; }
.close { margin-left: auto; color: #888; }
.add { gap: 4px; margin-left: 2px; }
.wps-tools { width: 49px; margin-left: auto; display: flex; justify-content: space-between; }
.avatar { width: 12px; height: 12px; margin: 0 4px 0 6px; border-radius: 50%; background: radial-gradient(#98dcf8 2px, #3eb9ef 4px); }
.wps-frame { display: flex; align-self: stretch; padding-right: 1px; }
.wps-frame button { width: 23px; }
.wps-frame .hover { width: 24px; background: #d1d5db; }

.menubar { display: flex; align-items: center; height: 19px; padding-right: 8px; }
.quick { flex: none; width: 397px; display: flex; align-items: center; gap: 8px; padding-left: 9px; }
.file { gap: 4px; }
.autosave { display: flex; align-items: center; gap: 4px; }
.autosave input { appearance: none; width: 16px; height: 9px; border-radius: 5px; background: radial-gradient(circle at 4px 50%, #fff 3px, #888 4px); }
.quick-icons { width: 56px; display: flex; justify-content: space-between; }
.menus { display: flex; gap: 19px; margin-right: 6px; font-size: 8px; }
.menus button { height: 16px; border-bottom: 1px solid transparent; }
.menus .on, .outline-tabs .on { color: #1c5fc9; font-weight: 700; border-bottom-color: #1c5fc9; }
.wpsai { gap: 2px; margin: 0 12px 0 8px; font-size: 8px; }
.find { margin-left: 6px; }
.cloud { gap: 2px; margin-left: auto; }
.share { gap: 3px; width: 33px; height: 14px; margin-left: 7px; border-radius: 3px; background: #2067e5; color: #fff; }

/* ribbon */
.ribbon { display: flex; height: 43px; margin: 3px 8px 0 7px; padding: 3px 0; background: #fff; border-radius: 5px; box-shadow: 0 1px 1px #c4c9cc; }
.group { position: relative; flex: none; display: flex; border-right: 1px solid #dfdfdf; }
.launch { position: absolute; right: 1px; bottom: 0; width: 6px; height: 6px; color: #777; }
.big { flex-direction: column; justify-content: flex-start; gap: 4px; padding-top: 4px; }
.big span { display: flex; align-items: center; gap: 1px; height: 9px; }
.stack { display: flex; flex-direction: column; gap: 6px; padding-top: 5px; }
.stack button { height: 10px; gap: 2px; }
.clipboard { width: 99px; padding-left: 27px; gap: 6px; }
.font, .para { flex-direction: column; gap: 3px; }
.font { width: 199px; padding: 2px 6px 0 5px; }
.para { width: 173px; padding: 2px 7px 0 7px; }
.row { display: flex; align-items: center; justify-content: space-between; height: 14px; }
.row button { gap: 2px; height: 14px; min-width: 10px; }
.font .row + .row { padding-left: 1px; }
.combos { display: flex; width: 113px; height: 14px; border: 1px solid #d6d6d6; border-radius: 2px; }
.combos select { appearance: none; flex: 1; min-width: 0; padding: 0 5px; color: #333; background: linear-gradient(45deg, transparent 45%, #777 45% 55%, transparent 55%) right 7px center / 3px 3px no-repeat, linear-gradient(-45deg, transparent 45%, #777 45% 55%, transparent 55%) right 4px center / 3px 3px no-repeat; }
.combos .size { flex: none; width: 36px; border-left: 1px solid #d6d6d6; }
.pressed { background: #d9dade; border-radius: 2px; box-shadow: 0 0 0 1px #d9dade; }
.row .pressed { height: 11px; }
.style-group { width: 388px; padding-left: 5px; gap: 5px; }
.gallery { display: flex; align-items: center; width: 341px; height: 31px; margin-top: 2px; border: 1px solid #ddd; border-radius: 3px; }
.gallery button { height: 25px; color: #111; }
.gallery .chosen { width: 53px; height: 26px; margin-left: 1px; border: 2px solid #c8c8c8; border-radius: 2px; }
.gallery .h1 { width: 57px; font-size: 12px; font-weight: 700; }
.gallery .h2 { width: 55px; font-size: 9px; font-weight: 700; }
.gallery .h4 { width: 55px; font-size: 9px; font-weight: 700; }
.gallery .default { width: 54px; font-size: 8px; }
.gallery-nav { display: flex; flex-direction: column; gap: 4px; margin-left: auto; padding-right: 1px; }
.search-group { width: 92px; padding-left: 7px; gap: 7px; }
.arrange-group { width: 98px; padding: 0 7px 0 6px; justify-content: space-between; }
.last { border: 0; padding-left: 7px; }

/* workspace */
.workspace { flex: 1; display: flex; margin-top: 1px; }
.outline { flex: none; width: 158px; display: flex; flex-direction: column; padding: 6px 7px 0; background: linear-gradient(100deg, #dddfe8, #e3e4ee); border-right: 1px solid #cbd2d3; }
.outline-tabs { display: flex; gap: 11px; font-size: 8px; }
.outline-tabs button { height: 15px; border-bottom: 1px solid transparent; }
.outline-tools { display: flex; gap: 2px; margin-top: 12px; }
.outline-tools button { width: 14px; height: 13px; background: #fff; border: 1px solid #d3d4da; border-radius: 2px; }
.outline-tools .soft { color: #777; }
.empty { flex: 1; display: flex; flex-direction: column; align-items: center; justify-content: center; padding-top: 9px; text-align: center; }
.empty h2 { font-size: 10px; line-height: 14px; color: #111; }
.empty p { margin-top: 3px; font-size: 8px; line-height: 12px; color: #777; }
.empty button { width: 62px; height: 19px; margin-top: 9px; border-radius: 3px; background: #8250f5; color: #fff; font-size: 8px; }
.canvas { flex: 1; display: flex; justify-content: center; background: linear-gradient(90deg, #d5e7db, #d1e8d8 18%, #cde9d2 25%, #cde7d2 80%, #d0e9d6 84%, #d5e7dc); }
.sheet { width: 52%; background: #cfe6cb; border: solid #b9cfba; border-width: 0 1px; }
.scroll { flex: none; width: 8px; display: flex; flex-direction: column; align-items: center; gap: 5px; padding: 4px 0 3px; background: #dbe3e3; color: #555; }
.tri { fill: currentColor; }
.track { flex: 1; width: 4px; display: flex; flex-direction: column; }
.track::before { content: ""; flex: 92; }
.thumb { flex: 302; border-radius: 2px; background: #b9bfc4; }
.track::after { content: ""; flex: 46; }
.jumps { display: flex; flex-direction: column; gap: 5px; }

.status { display: flex; align-items: center; gap: 7px; height: 13px; padding-left: 9px; background: #e2e4ed; border-top: 1px solid #d5d9df; }
.status button { gap: 4px; }
.views { display: flex; justify-content: space-between; align-items: center; width: 134px; margin-left: auto; margin-right: 173px; color: #555; }
.taskbar { display: flex; align-items: center; height: 29px; padding: 0 11px 0 285px; background: linear-gradient(90deg, #d5dcea, #d5dcf4 40%, #d9def0 60%, #dbe0ea); border-top: 1px solid #cbd0de; }
.apps { width: 556px; display: flex; justify-content: space-between; }
.apps button { flex-direction: column; gap: 2px; height: 22px; padding-top: 3px; width: 14px; }
.apps button::after { content: ""; width: 4px; height: 2px; border-radius: 1px; background: #858b99; }
.apps .plain::after { background: none; }
.apps .focused { width: 22px; margin: 0 -4px; background: #eceef7; border-radius: 2px; }
.apps .focused::after { width: 9px; background: #1672c5; }
.tile { width: 14px; height: 14px; border-radius: 3px; background: #1d43d4; color: #fff; font-weight: 700; line-height: 14px; }
.tray { width: 89px; margin-left: auto; margin-right: 12px; display: flex; justify-content: space-between; }
.taskbar > .i { margin-right: 4px; }
.clock { margin-left: 5px; line-height: 9px; text-align: right; }
.ime { position: absolute; right: 4px; bottom: 28px; display: flex; align-items: center; justify-content: space-between; width: 167px; height: 18px; padding: 0 4px; border-radius: 4px; background: #fff; box-shadow: 0 0 2px #b6bac4; color: #222; }
.lang { font-size: 10px; font-weight: 700; }
```
